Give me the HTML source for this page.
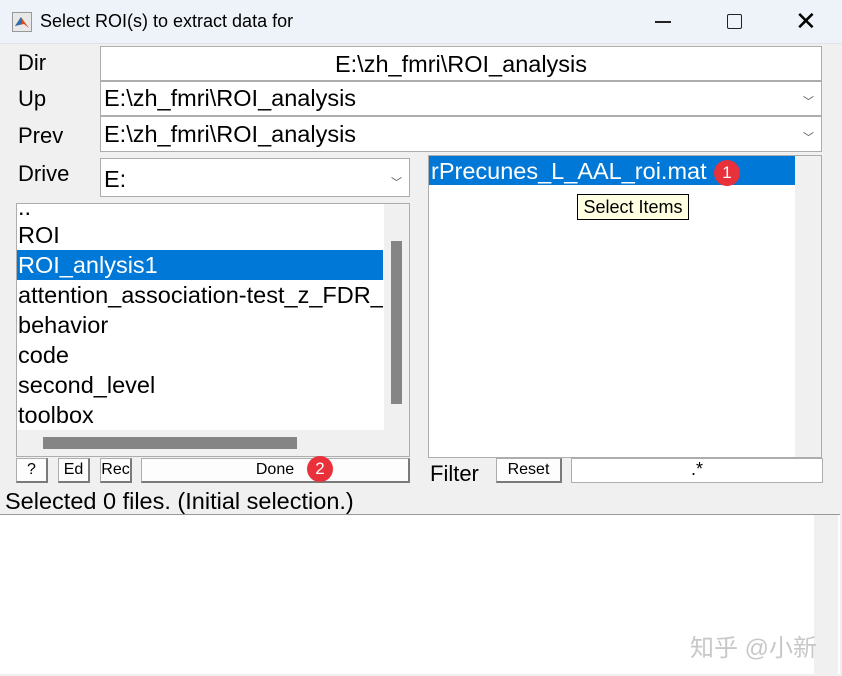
<!DOCTYPE html>
<html><head><meta charset="utf-8"><style>
body{margin:0;width:842px;height:676px;background:#f0f0f0;font-family:"Liberation Sans",Arial,sans-serif;position:relative;overflow:hidden}
div{position:absolute;box-sizing:border-box}
.lbl{font-size:22px;color:#000}
.box{background:#fff;border:1px solid #adadad}
.t{font-size:23.5px;white-space:nowrap}
.btn{background:#fdfdfd;border:1px solid #adadad;border-bottom:2px solid #7a7a7a;border-right:2px solid #7a7a7a;font-size:16px;text-align:center;line-height:22px}
.badge{width:26px;height:26px;border-radius:13px;background:#e8313a;color:#fff;font-size:17px;text-align:center;line-height:26px}
.chev{font-size:11px;color:#555}
</style></head><body>
<div style="left:0;top:0;width:842px;height:44px;background:#eef3f9;border-bottom:1px solid #dfe3e8"></div>
<div style="left:12px;top:12px;width:20px;height:20px;background:#e8e8e8;border:1px solid #999"><svg width="18" height="18" viewBox="0 0 18 18"><path d="M2 13L8 4L16 15L11 11Z" fill="#d9501e"/><path d="M2 13L8 4L9 11Z" fill="#2a6fb0"/></svg></div>
<div class="t" style="left:40px;top:11px;font-size:18px">Select ROI(s) to extract data for</div>
<div style="left:655px;top:21px;width:16px;height:1.5px;background:#222"></div>
<div style="left:727px;top:14px;width:15px;height:15px;border:1.5px solid #222;border-radius:2px"></div>
<div class="t" style="left:795px;top:6px;font-size:26px;font-weight:300">✕</div>

<div class="lbl" style="left:18px;top:50px">Dir</div>
<div class="box" style="left:100px;top:46px;width:722px;height:35px"></div>
<div class="t" style="left:100px;top:51px;width:722px;text-align:center">E:\zh_fmri\ROI_analysis</div>
<div class="lbl" style="left:18px;top:86px">Up</div>
<div class="box" style="left:100px;top:81px;width:722px;height:35px"></div>
<div class="t" style="left:104px;top:85px">E:\zh_fmri\ROI_analysis</div>
<div class="t chev" style="left:803px;top:93px">﹀</div>
<div class="lbl" style="left:18px;top:123px">Prev</div>
<div class="box" style="left:100px;top:116px;width:722px;height:36px"></div>
<div class="t" style="left:104px;top:121px">E:\zh_fmri\ROI_analysis</div>
<div class="t chev" style="left:803px;top:129px">﹀</div>
<div class="lbl" style="left:18px;top:161px">Drive</div>
<div class="box" style="left:100px;top:158px;width:310px;height:39px"></div>
<div class="t" style="left:104px;top:166px">E:</div>
<div class="t chev" style="left:391px;top:174px">﹀</div>

<div class="box" style="left:16px;top:203px;width:394px;height:254px"></div>
<div style="left:384px;top:204px;width:25px;height:226px;background:#f0f0f0"></div>
<div style="left:391px;top:241px;width:11px;height:163px;background:#858585"></div>
<div style="left:17px;top:430px;width:392px;height:26px;background:#f0f0f0"></div>
<div style="left:43px;top:437px;width:254px;height:12px;background:#858585"></div>
<div style="left:17px;top:250px;width:366px;height:30px;background:#0078d7"></div>
<div class="t" style="left:18px;top:194px">..</div>
<div class="t" style="left:18px;top:222px">ROI</div>
<div class="t" style="left:18px;top:252px;color:#fff">ROI_anlysis1</div>
<div class="t" style="left:18px;top:282px;width:365px;overflow:hidden">attention_association-test_z_FDR_</div>
<div class="t" style="left:18px;top:312px">behavior</div>
<div class="t" style="left:18px;top:342px">code</div>
<div class="t" style="left:18px;top:372px">second_level</div>
<div class="t" style="left:18px;top:402px">toolbox</div>

<div class="btn" style="left:16px;top:458px;width:32px;height:25px">?</div>
<div class="btn" style="left:58px;top:458px;width:32px;height:25px">Ed</div>
<div class="btn" style="left:100px;top:458px;width:32px;height:25px">Rec</div>
<div class="btn" style="left:141px;top:458px;width:269px;height:25px">Done</div>
<div class="badge" style="left:307px;top:456px">2</div>

<div class="box" style="left:428px;top:155px;width:394px;height:303px"></div>
<div style="left:795px;top:156px;width:26px;height:301px;background:#f0f0f0"></div>
<div style="left:429px;top:156px;width:366px;height:29px;background:#0078d7"></div>
<div class="t" style="left:431px;top:158px;color:#fff">rPrecunes_L_AAL_roi.mat</div>
<div class="badge" style="left:714px;top:160px">1</div>
<div style="left:577px;top:194px;width:112px;height:26px;background:#ffffe1;border:1px solid #000;font-size:18px;text-align:center;line-height:24px">Select Items</div>

<div class="lbl" style="left:430px;top:461px">Filter</div>
<div class="btn" style="left:496px;top:458px;width:66px;height:25px">Reset</div>
<div class="box" style="left:571px;top:458px;width:252px;height:25px;text-align:center;font-size:18px;line-height:20px">.*</div>

<div class="t" style="left:5px;top:488px">Selected 0 files. (Initial selection.)</div>
<div style="left:0;top:514px;width:840px;height:160px;background:#fff;border-top:1px solid #999"></div>
<div style="left:814px;top:515px;width:24px;height:159px;background:#f0f0f0"></div>
<div class="t" style="left:690px;top:628px;font-size:24px;color:#c8c8c8;font-family:'Liberation Sans','Noto Sans CJK SC',sans-serif">知乎 @小新</div>
</body></html>
